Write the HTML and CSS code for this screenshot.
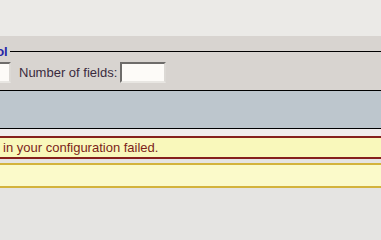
FILE: index.html
```html
<!DOCTYPE html>
<html lang="en">
<head>
<meta charset="utf-8">
<title>Configuration</title>
<link rel="stylesheet" href="styles.css">
</head>
<body>
<div class="top"></div>
<div class="panel">
  <fieldset class="group">
    <legend class="group-title">Protocol</legend>
    <div class="row">
      <label class="lbl lbl-first" for="port">Port:</label>
      <input class="num" id="port" type="text">
      <label class="lbl lbl-fields" for="fields">Number of fields:</label>
      <input class="num" id="fields" type="text">
    </div>
  </fieldset>
</div>
<div class="band"></div>
<div class="messages">
  <div class="msg msg-error">Validation of the values in your configuration failed.</div>
  <div class="msg msg-warning">Please review the highlighted settings.</div>
</div>
</body>
</html>
```
FILE: styles.css
```css
html, body {
  margin: 0;
  padding: 0;
  overflow: hidden;
  width: 381px;
  height: 200px;
}
body {
  background: #e5e4e2;
  font-family: "Liberation Sans", Arial, sans-serif;
  font-size: 13px;
}
.top {
  height: 36px;
  background: #ebeae7;
}
.panel {
  background: #d8d4d0;
  padding-top: 8px;
}
.group {
  margin: 0 -60px 0 -100px;
  padding: 3px 0 7px 0;
  border: none;
  border-top: 1px solid #000;
  border-bottom: 1px solid #000;
  min-width: 0;
}
.group-title {
  margin-left: 53px;
  padding: 0 2px;
  font-weight: bold;
  font-size: 13px;
  line-height: 15px;
  color: #2626a8;
}
.row {
  display: flex;
  align-items: center;
  height: 21px;
}
.lbl {
  color: #3a2b3e;
  line-height: 15px;
}
.lbl-first {
  width: 60px;
  text-align: right;
  margin-right: 5px;
}
.lbl-fields {
  margin-left: 8px;
  margin-right: 3px;
}
.num {
  box-sizing: border-box;
  width: 46px;
  height: 21px;
  margin: 0;
  padding: 0 2px;
  border: 2px solid;
  border-color: #6e6c6a #dcd9d5 #e8e6e2 #6e6c6a;
  background: #fdfbf8;
  font: 13px "Liberation Sans", Arial, sans-serif;
}
.band {
  height: 37px;
  background: #bdc6cd;
  border-bottom: 1px solid #000;
}
.messages {
  padding-top: 7px;
  background: linear-gradient(#f1ecec, #f1ecec 7px, #e5e4e2 7px);
}
.msg {
  margin: 0 -40px 0 -150px;
  padding-left: 14px;
  white-space: nowrap;
  overflow: hidden;
}
.msg-error {
  border: 2px solid #86201c;
  background: #f9f8bb;
  color: #7c1f1a;
  line-height: 19px;
  margin-bottom: 4px;
}
.msg-warning {
  border: 2px solid #d3b33c;
  background: #fbfaca;
  color: #6a5a12;
  line-height: 21px;
  text-indent: -89px;
}
```
